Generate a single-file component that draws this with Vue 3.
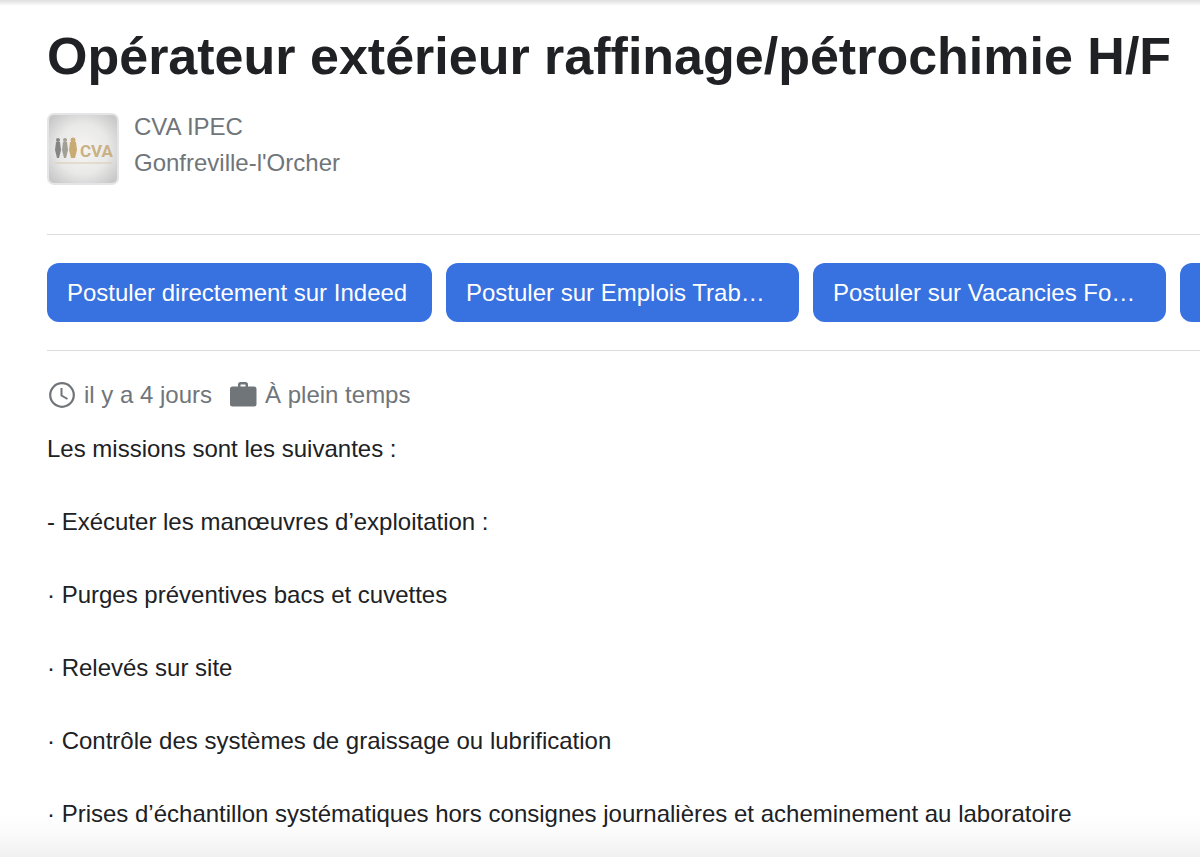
<script setup>
const actions = [
  { text: 'Postuler directement sur Indeed' },
  { text: 'Postuler sur Emplois Trab…' },
  { text: 'Postuler sur Vacancies Fo…' },
  { text: '', label: 'Postuler' },
]
const lines = [
  'Les missions sont les suivantes :',
  '- Exécuter les manœuvres d’exploitation :',
  '· Purges préventives bacs et cuvettes',
  '· Relevés sur site',
  '· Contrôle des systèmes de graissage ou lubrification',
  '· Prises d’échantillon systématiques hors consignes journalières et acheminement au laboratoire',
]
</script>

<template>
  <main class="job">
    <h1>Opérateur extérieur raffinage/pétrochimie H/F</h1>
    <header class="company">
      <svg class="logo" viewBox="0 0 72 72" role="img" aria-label="CVA">
        <defs>
          <radialGradient id="shade" cx="50%" cy="50%" r="72%">
            <stop offset="0" stop-color="#f6f5f4" />
            <stop offset=".5" stop-color="#e9e9e8" />
            <stop offset="1" stop-color="#bdbdbe" />
          </radialGradient>
        </defs>
        <rect x="1" y="1" width="70" height="70" rx="6" fill="url(#shade)" stroke="#e4e5e7" stroke-width="2" />
        <g fill="#858585"><circle cx="11" cy="27" r="2" /><path d="M9 29H13L14 37L12 45H10L8 37Z" /></g>
        <g fill="#a39f95"><circle cx="18" cy="27" r="2" /><path d="M16 29H20L21 37L19 45H17L15 37Z" /></g>
        <g fill="#c9ab74"><circle cx="26" cy="27" r="2.5" /><path d="M23 29H29L30 37L28 45H24L22 37Z" /></g>
        <text x="33" y="44" class="mark">CVA</text>
        <path d="M8 50H65" stroke="#d8cbb0" stroke-width="1" />
      </svg>
      <div class="names">
        <div>CVA IPEC</div>
        <div>Gonfreville-l'Orcher</div>
      </div>
    </header>
    <nav class="actions">
      <a v-for="(a, i) in actions" :key="i" href="#" :aria-label="a.label">{{ a.text }}</a>
    </nav>
    <div class="facts">
      <svg viewBox="0 0 30 30" aria-hidden="true"><g fill="none" stroke="#70757a"><circle cx="15" cy="15" r="11.8" stroke-width="2.2" /><path d="M14.500 8V15.500L20.500 19" stroke-width="2" /></g></svg>
      <span>il y a 4 jours</span>
      <svg class="bag" viewBox="0 0 30 30" aria-hidden="true"><path fill="#70757a" fill-rule="evenodd" d="M4 6.500H10V4.500Q10 2 12.500 2H17.500Q20 2 20 4.500V6.500H26Q28.500 6.500 28.500 9V24Q28.500 26.500 26 26.500H4.500Q2 26.500 2 24V9Q2 6.500 4.500 6.500ZM12.500 4.500V6.500H17.500V4.500Z" /></svg>
      <span>À plein temps</span>
    </div>
    <section class="description">
      <p v-for="l in lines" :key="l">{{ l }}</p>
    </section>
  </main>
</template>

<style>
body { margin: 0; background: #fff; overflow: hidden; }
</style>
<style scoped>
.job { font-family: "Liberation Sans", Arial, sans-serif; font-size: 24px; color: #202124; padding: 25px 0 0 47px; }
.job::before, .job::after { content: ""; position: fixed; left: 0; right: 0; pointer-events: none; }
.job::before { top: 0; height: 6px; background: linear-gradient(rgba(0, 0, 0, .12), rgba(0, 0, 0, .08) 40%, transparent); }
.job::after { bottom: 0; height: 44px; background: linear-gradient(transparent, rgba(0, 0, 0, .02) 50%, rgba(0, 0, 0, .06)); }
h1 { margin: 0; font-size: 52px; line-height: 62px; white-space: nowrap; }
.company { display: flex; gap: 15px; margin-top: 22px; padding-bottom: 49px; color: #70757a; }
.logo { width: 72px; height: 72px; margin-top: 4px; }
.mark { font-family: Roboto, "Liberation Sans", sans-serif; font-size: 17px; font-weight: bold; fill: #c9b184; }
.names { line-height: 36px; }
.actions { display: flex; gap: 14px; padding: 28px 0; border: solid #dadce0; border-width: 1px 0; overflow: hidden; }
.actions a { flex: none; box-sizing: border-box; width: 353px; padding: 0 20px; border-radius: 12px; background: #3871e0; color: #fff; line-height: 59px; white-space: nowrap; text-decoration: none; }
.actions a:first-child { width: 385px; }
.facts { display: flex; align-items: center; margin-top: 28px; line-height: 32px; color: #70757a; }
.facts svg { width: 30px; height: 30px; margin-right: 7px; }
.facts .bag { margin-left: 16px; }
.description { margin-top: 20px; }
p { margin: 0 0 37px; line-height: 36px; }
</style>
